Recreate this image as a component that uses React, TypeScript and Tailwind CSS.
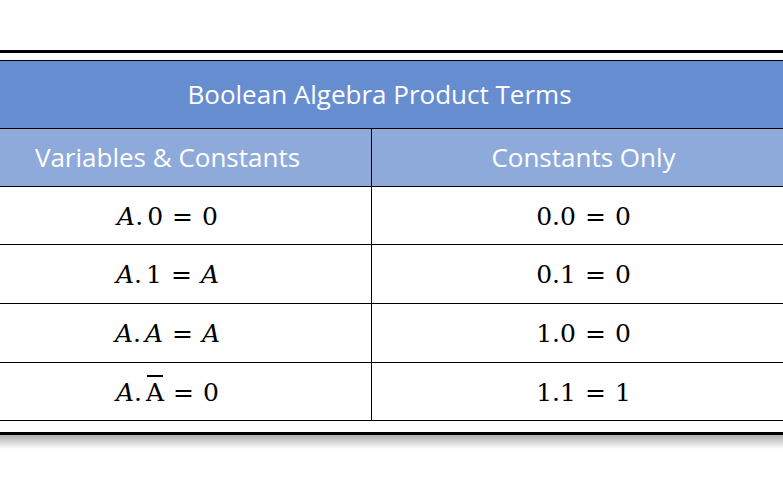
import React from "react";

const rows = [
  { left: ["A", "0", "0"], right: "0.0 = 0", h: "h-[58px]" },
  { left: ["A", "1", "A"], right: "0.1 = 0", h: "h-[59px]" },
  { left: ["A", "A", "A"], right: "1.0 = 0", h: "h-[59px]" },
  { left: ["A", "bar", "0"], right: "1.1 = 1", h: "h-[58px]" },
];

const Term = ({ parts }: { parts: string[] }) => {
  const [a, b, c] = parts;
  const it = (s: string) => (s === "A" ? <span className="italic">A</span> : <span>{s}</span>);
  return (
    <span className="flex items-baseline">
      <span className="italic">{a}</span>
      <span className="mr-[4px]">.</span>
      {b === "bar" ? (
        <span className="relative">
          A
          <span className="absolute left-[1px] right-[1px] top-[1px] h-[2px] bg-black" />
        </span>
      ) : (
        it(b)
      )}
      <span className="mx-[9px]">=</span>
      {it(c)}
    </span>
  );
};

const App = () => {
  return (
    <div className="w-[783px] h-[503px] overflow-hidden bg-white">
      <div className="ml-[-36px] w-[831px] pt-[50px]">
        <div className="h-[3px] bg-black" />
        <div className="h-[7px]" />
        <div className="h-[68px] border-t border-black bg-[#678dd1] flex items-center justify-center text-white text-[26px] font-['Open_Sans',sans-serif]">
          Boolean Algebra Product Terms
        </div>
        <div className="h-[58px] border-t border-black bg-[#8eaadb] grid grid-cols-[408px_1fr] text-white text-[26px] font-['Open_Sans',sans-serif]">
          <div className="flex items-center justify-center border-r border-black">Variables &amp; Constants</div>
          <div className="flex items-center justify-center">Constants Only</div>
        </div>
        {rows.map((r, i) => (
          <div
            key={i}
            className={`${r.h} border-t border-black grid grid-cols-[408px_1fr] text-black text-[25px] font-['DejaVu_Serif',serif]`}
          >
            <div className="flex items-center justify-center border-r border-black pt-[2px]">
              <Term parts={r.left} />
            </div>
            <div className="flex items-center justify-center pt-[2px]">
              <span className="flex items-baseline">
                <span>{r.right.split(" = ")[0]}</span>
                <span className="mx-[9px]">=</span>
                <span>{r.right.split(" = ")[1]}</span>
              </span>
            </div>
          </div>
        ))}
        <div className="h-[12px] border-t border-black" />
        <div className="h-[3px] bg-black" />
        <div className="h-[14px] bg-gradient-to-b from-[#b0b0b0] to-white" />
      </div>
    </div>
  );
};

export default App;
